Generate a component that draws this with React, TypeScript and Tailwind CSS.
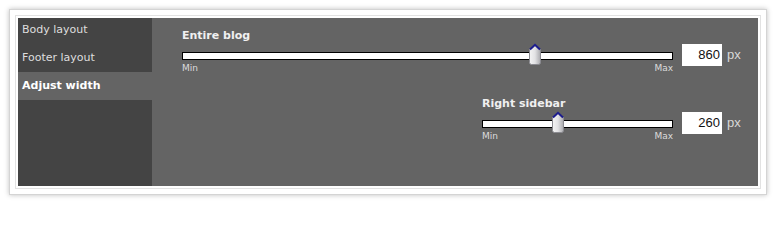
import React from 'react'

const sans = { fontFamily: '"DejaVu Sans", Verdana, sans-serif' }
const arial = { fontFamily: '"Liberation Sans", Arial, sans-serif' }

function Thumb() {
  return (
    <svg width="12" height="22" viewBox="0 0 12 22">
      <defs>
        <linearGradient id="tg" x1="0" y1="0" x2="1" y2="0">
          <stop offset="0" stopColor="#f4f4f4" />
          <stop offset="0.5" stopColor="#e2e2e4" />
          <stop offset="1" stopColor="#a9a9ad" />
        </linearGradient>
      </defs>
      <path d="M0.5 6.5 L6 1.5 L11.5 6.5 L11.5 19.5 Q11.5 21.5 9.5 21.5 L2.5 21.5 Q0.5 21.5 0.5 19.5 Z" fill="url(#tg)" stroke="#8a8a90" strokeWidth="1" />
      <path d="M1 6.5 L6 1.8 L11 6.5" fill="none" stroke="#1c1c8c" strokeWidth="2" />
    </svg>
  )
}

function Slider({ title, width, ml, pos, value }: { title: string; width: number; ml: number; pos: number; value: number }) {
  return (
    <div className="flex flex-col" style={{ marginLeft: ml }}>
      <div className="h-[16px] text-[11px] leading-[16px] font-bold text-[#f0f0f0]" style={sans}>{title}</div>
      <div className="flex items-center">
        <div className="relative h-[22px]" style={{ width }}>
          <div className="absolute left-0 right-0 top-[8px] h-[8px] border border-black bg-white" />
          <div className="absolute top-[-1px]" style={{ left: pos - 6 }}>
            <Thumb />
          </div>
        </div>
        <div className="ml-[9px] flex h-[22px] w-[40px] items-center justify-end bg-white pr-[2px] text-[13px] text-[#111]" style={arial}>{value}</div>
        <span className="ml-[5px] text-[13px] text-[#d8d8d8]" style={arial}>px</span>
      </div>
      <div className="mt-[-3px] flex justify-between text-[9px] leading-[11px] text-[#dcdcdc]" style={{ ...sans, width }}>
        <span>Min</span>
        <span>Max</span>
      </div>
    </div>
  )
}

export default function App() {
  return (
    <div className="h-[204px] w-[775px] bg-white pl-[9px] pt-[9px]">
      <div className="w-[758px] border border-[#d4d4d4] bg-white p-[5px] shadow-[0_0_5px_rgba(0,0,0,0.25)]">
        <div className="border border-[#e2e2e2] p-[2px]">
          <div className="flex h-[168px] bg-[#646464]">
            <div className="flex w-[134px] flex-col bg-[#444444] text-[11px]" style={sans}>
              <div className="flex h-[26px] items-center pl-[4px] pb-[1px] text-[#dedede]">Body layout</div>
              <div className="flex h-[28px] items-center pl-[4px] text-[#dedede]">Footer layout</div>
              <div className="flex h-[28px] items-center bg-[#646464] pl-[4px] font-bold text-white">Adjust width</div>
            </div>
            <div className="flex flex-1 flex-col pt-[10px]">
              <Slider title="Entire blog" width={491} ml={30} pos={353} value={860} />
              <div className="h-[22px]" />
              <Slider title="Right sidebar" width={191} ml={330} pos={76} value={260} />
            </div>
          </div>
        </div>
      </div>
    </div>
  )
}
